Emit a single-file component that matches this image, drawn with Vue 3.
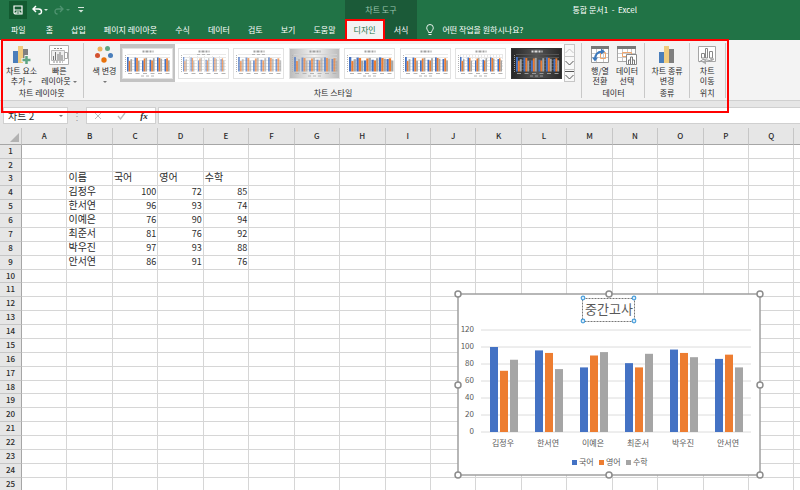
<script setup>
import { ref, computed } from 'vue'

const tabs = ['파일', '홈', '삽입', '페이지 레이아웃', '수식', '데이터', '검토', '보기', '도움말']
const columns = 'ABCDEFGHIJKLMNOPQ'.split('')
const rowCount = 25

const subjects = [
  { name: '국어', color: '#4472c4' },
  { name: '영어', color: '#ed7d31' },
  { name: '수학', color: '#a5a5a5' }
]

const students = [
  { name: '김정우', scores: [100, 72, 85] },
  { name: '한서연', scores: [96, 93, 74] },
  { name: '이예은', scores: [76, 90, 94] },
  { name: '최준서', scores: [81, 76, 92] },
  { name: '박우진', scores: [97, 93, 88] },
  { name: '안서연', scores: [86, 91, 76] }
]

const nameBox = ref('차트 2')
const formula = ref('')
const selectedStyle = ref(0)

const chartStyles = [
  { look: 'plain', bar: 1.7, legend: 'bottom' },
  { look: 'plain', bar: 1.3, legend: 'top', pale: true, dropLines: true },
  { look: 'plain', bar: 1.9, legend: 'top', pale: true },
  { look: 'silver', bar: 2, legend: 'bottom', pale: true },
  { look: 'plain', bar: 2.3, legend: 'bottom' },
  { look: 'plain', bar: 1.8, legend: 'bottom' },
  { look: 'plain', bar: 1.5, legend: 'bottom', hatch: true },
  { look: 'dark', bar: 1.9, legend: 'bottom' }
]

// header row plus the score rows, keyed by cell address
const cells = computed(() => {
  const map = { B3: '이름' }
  subjects.forEach((s, i) => {
    map['CDE'[i] + 3] = s.name
  })
  students.forEach((student, r) => {
    map['B' + (r + 4)] = student.name
    student.scores.forEach((score, i) => {
      map['CDE'[i] + (r + 4)] = score
    })
  })
  return map
})

const ticks = [0, 20, 40, 60, 80, 100, 120]
const yOf = (value) => 138 - value * 0.85
const groupX = (i) => 23 + i * 45

const handles = [
  [0, 0], [151, 0], [302, 0],
  [0, 91], [302, 91],
  [0, 181], [151, 181], [302, 181]
]
const titleHandles = [[125, 4], [176, 4], [125, 27], [176, 27]]
</script>

<template>
  <div class="excel">
    <header class="top">
      <div class="quick">
        <button class="quick-btn save" aria-label="저장">
          <svg width="10" height="10" viewBox="0 0 10 10">
            <path d="M1 1h8v8H2L1 8z" fill="none" stroke="#fff" stroke-width="1.2" />
            <path d="M1 5h8" stroke="#fff" />
            <path d="M3 9V7h4v2" fill="none" stroke="#fff" />
          </svg>
        </button>
        <button class="quick-btn undo" aria-label="실행 취소">
          <svg width="18" height="10" viewBox="0 0 18 10">
            <path d="M4 1L1 4l3 3M1 4h5.5q3 0 3 2.6T6.5 9" fill="none" stroke="#fff" stroke-width="1.5" />
            <path d="M12 4h4l-2 2z" fill="#d5e5db" />
          </svg>
        </button>
        <button class="quick-btn redo" aria-label="다시 실행">
          <svg width="18" height="10" viewBox="0 0 18 10">
            <path d="M6 1l3 3-3 3M9 4H4Q1 4 1 6.5T3.5 9" fill="none" stroke="#4f9370" stroke-width="1.3" />
            <path d="M12 4h4l-2 2z" fill="#4f9370" />
          </svg>
        </button>
        <button class="quick-btn more" aria-label="빠른 실행 도구 모음 사용자 지정">
          <svg width="6" height="8" viewBox="0 0 6 8">
            <path d="M0 1.5h6" stroke="#d5e5db" />
            <path d="M.5 4h5L3 6.5z" fill="#d5e5db" />
          </svg>
        </button>
      </div>
      <div class="context-title">차트 도구</div>
      <h1 class="doc-title">통합 문서1&nbsp; -&nbsp; Excel</h1>

      <nav class="tabs">
        <button v-for="tab in tabs" :key="tab" class="tab">{{ tab }}</button>
      </nav>
      <nav class="tabs context">
        <button class="tab active">디자인</button>
        <button class="tab">서식</button>
      </nav>
      <button class="ask">
        <svg width="8" height="12" viewBox="0 0 8 12">
          <path d="M2.5 8.5C2.5 6.5.7 6 .7 3.8a3.3 3.3 0 0 1 6.6 0C7.3 6 5.5 6.5 5.5 8.5z" fill="none" stroke="#e8f1ec" />
          <path d="M2.5 10.5h3" stroke="#e8f1ec" />
        </svg>
        어떤 작업을 원하시나요?
      </button>
    </header>

    <section class="ribbon">
      <div class="groups">
        <div class="group">
          <div class="tools">
            <button class="tool">
              <svg width="20" height="20" viewBox="0 0 20 20">
                <path d="M1 6h5v12H1z" fill="#4a7ebb" />
                <path d="M6 1h5v17H6z" fill="#efcb7e" />
                <path d="M11 4h5v11h-5z" fill="#7f7f7f" />
                <path d="M14.5 10v10M9.5 15h10" stroke="#f3f3f3" stroke-width="4" />
                <path d="M14.5 11v8M10.5 15h8" stroke="#5fa583" stroke-width="2.5" />
              </svg>
              <span>차트 요소</span>
              <span>추가 <i class="caret"></i></span>
            </button>
            <button class="tool">
              <svg width="20" height="20" viewBox="0 0 20 20">
                <path d="M.5.5h19v19H.5z" fill="#fff" stroke="#b0b0b0" />
                <path d="M5 3.5h9M4 17h10" stroke="#8a8a8a" stroke-dasharray="2 1" />
                <path d="M2.5 5.5h13v10h-13z" fill="#eee" stroke="#b8b8b8" />
                <path d="M4.5 15v-4M6.5 15V7M9 15V9M11 15V7M13 15v-5" stroke="#777" />
                <path d="M15.5 7.5h3v6h-3z" fill="#fff" stroke="#a6a6a6" />
              </svg>
              <span>빠른</span>
              <span>레이아웃 <i class="caret"></i></span>
            </button>
          </div>
          <div class="group-name">차트 레이아웃</div>
        </div>

        <div class="group">
          <div class="tools">
            <button class="tool colors">
              <svg width="20" height="20" viewBox="0 0 20 20">
                <circle cx="6" cy="4" r="2.5" fill="#ecb45c" />
                <circle cx="13.5" cy="3.5" r="2.5" fill="#5fa583" />
                <circle cx="3.5" cy="10.5" r="2.5" fill="#d35230" />
                <circle cx="16.5" cy="10.5" r="2.5" fill="#4a7ebb" />
                <circle cx="10" cy="15" r="2.7" fill="#e8710a" />
              </svg>
              <span>색 변경</span>
              <span><i class="caret"></i></span>
            </button>
            <div class="gallery">
              <button
                v-for="(item, i) in chartStyles"
                :key="i"
                class="style-item"
                :class="{ selected: selectedStyle === i }"
                :aria-label="'스타일 ' + (i + 1)"
                @click="selectedStyle = i"
              >
                <svg class="thumb" :class="item.look" width="51" height="31" viewBox="0 0 51 31">
                  <defs>
                    <linearGradient id="silver"><stop stop-color="#bbb" /><stop offset=".5" stop-color="#f4f4f4" /><stop offset="1" stop-color="#bcbcbc" /></linearGradient>
                    <linearGradient id="dark"><stop stop-color="#262626" /><stop offset=".5" stop-color="#555" /><stop offset="1" stop-color="#282828" /></linearGradient>
                  </defs>
                  <rect class="paper" x=".5" y=".5" width="50" height="30" />
                  <path class="head" d="M20.5 3.5h11" stroke-dasharray="2 1 3 1" stroke-width="2" />
                  <path class="lines" d="M5 6.5h43M5 9.5h43M5 12.5h43M5 15.5h43M5 18.5h43M5 21.5h43" />
                  <path v-if="item.hatch" class="lines" d="M5 7.5h43M5 8.5h43M5 10.5h43M5 13.5h43M5 17.5h43" stroke-dasharray="1 2" />
                  <path v-if="item.dropLines" class="lines" d="M11.5 8v16M19.5 8v16M26.5 8v16M34.5 8v16M41.5 8v16" />
                  <path class="marks" d="M3.5 7v17" stroke-dasharray="1 1" />
                  <g v-for="(student, n) in students" :key="n" :opacity="item.pale ? 0.7 : 1">
                    <rect
                      v-for="(score, k) in student.scores"
                      :key="k"
                      :x="5 + n * 7.5 + k * item.bar"
                      :y="23.5 - score * 0.145"
                      :width="item.bar"
                      :height="score * 0.145"
                      :fill="subjects[k].color"
                    />
                  </g>
                  <path class="marks" d="M6 25.5h42" stroke-dasharray="4 3.5" />
                  <path class="marks" :d="item.legend === 'top' ? 'M19 6.5h13' : 'M19 28h13'" stroke-dasharray="3 2" />
                </svg>
              </button>
              <div class="scroller">
                <button aria-label="위로"><svg width="9" height="6" viewBox="0 0 9 6"><path d="M.5 5l4-4 4 4" fill="none" stroke="#c4c4c4" /></svg></button>
                <button aria-label="아래로"><svg width="9" height="6" viewBox="0 0 9 6"><path d="M.5 1l4 4 4-4" fill="none" stroke="#555" /></svg></button>
                <button aria-label="자세히"><svg width="9" height="9" viewBox="0 0 9 9"><path d="M0 .5h9M.5 4l4 4 4-4" fill="none" stroke="#555" /></svg></button>
              </div>
            </div>
          </div>
          <div class="group-name">차트 스타일</div>
        </div>

        <div class="group">
          <div class="tools">
            <button class="tool">
              <svg width="20" height="20" viewBox="0 0 20 20">
                <path d="M1.5 2.5h17v15h-17z" fill="#fff" stroke="#9a9a9a" />
                <path d="M1 1h18v3H1z" fill="#777" />
                <path d="M2 8.5h16M2 12.5h16M6.5 4v13M13.5 4v13" stroke="#c9c9c9" />
                <path d="M10.5 7.5h5v6h-5z" fill="none" stroke="#f0a56b" />
                <path d="M5 14.5C5 9.5 7 7 12 6.5" fill="none" stroke="#3b78bd" stroke-width="2" />
                <path d="M11 3.5l4 3-4 3zM2 12.5h6l-3 4z" fill="#3b78bd" />
              </svg>
              <span>행/열</span>
              <span>전환</span>
            </button>
            <button class="tool">
              <svg width="20" height="20" viewBox="0 0 20 20">
                <path d="M.5 2.5h18v14H.5z" fill="#fff" stroke="#a6a6a6" />
                <path d="M0 1h19v3H0z" fill="#777" />
                <path d="M1 8.5h17M1 12.5h17M5.5 4v12M10.5 4v12M14.5 4v12" stroke="#c9c9c9" />
                <path d="M5.5 7.5h9v4h-9z" fill="none" stroke="#f0a56b" />
                <path d="M9.5 9.5h10v10h-10z" fill="#fff" stroke="#888" />
                <path d="M11.5 19v-4h2v4M13.5 19v-7h2v7M15.5 15h2v4" fill="none" stroke="#777" />
              </svg>
              <span>데이터</span>
              <span>선택</span>
            </button>
          </div>
          <div class="group-name">데이터</div>
        </div>

        <div class="group">
          <div class="tools">
            <button class="tool">
              <svg width="20" height="20" viewBox="0 0 20 20">
                <path d="M2 7h5v11H2z" fill="#4a7ebb" />
                <path d="M7 1h5v17H7z" fill="#efcb7e" />
                <path d="M12 4h5v14h-5z" fill="#7f7f7f" />
              </svg>
              <span>차트 종류</span>
              <span>변경</span>
            </button>
          </div>
          <div class="group-name">종류</div>
        </div>

        <div class="group">
          <div class="tools">
            <button class="tool">
              <svg width="20" height="20" viewBox="0 0 20 20">
                <path d="M1.5 1.5h17v15h-17z" fill="#fff" stroke="#a6a6a6" />
                <path d="M4.5 13V8.5h3V13zM8.5 13V3.5h2V13zM12.5 13V6.5h3V13z" fill="#fff" stroke="#888" />
                <path d="M2 17q4-4 8-2t7-1" fill="none" stroke="#999" />
                <path d="M5 17l4-2.5v5zM13 13l4 .5-3 3.5z" fill="#aaa" />
              </svg>
              <span>차트</span>
              <span>이동</span>
            </button>
          </div>
          <div class="group-name">위치</div>
        </div>
      </div>
    </section>

    <section class="formula-bar">
      <div class="name-box">
        <input v-model="nameBox" aria-label="이름 상자" />
        <i class="caret"></i>
      </div>
      <span class="grip">⋮</span>
      <div class="formula-tools">
        <button aria-label="취소"><svg width="8" height="8" viewBox="0 0 8 8"><path d="M1 1l6 6M7 1L1 7" stroke="#bbb" /></svg></button>
        <button aria-label="입력"><svg width="9" height="8" viewBox="0 0 9 8"><path d="M1 4l2.5 3L8 1" fill="none" stroke="#bbb" stroke-width="1.3" /></svg></button>
        <button class="fx" aria-label="함수 삽입">fx</button>
      </div>
      <input v-model="formula" class="formula" aria-label="수식 입력줄" />
    </section>

    <main class="sheet">
      <table>
        <thead>
          <tr>
            <th class="corner"><svg width="9" height="9" viewBox="0 0 9 9"><path d="M9 0v9H0z" fill="#b2b2b2" /></svg></th>
            <th v-for="col in columns" :key="col" scope="col">{{ col }}</th>
            <th></th>
          </tr>
        </thead>
        <tbody>
          <tr v-for="row in rowCount" :key="row">
            <th scope="row">{{ row }}</th>
            <td
              v-for="col in columns"
              :key="col"
              :class="{ number: typeof cells[col + row] === 'number' }"
            >{{ cells[col + row] }}</td>
            <td></td>
          </tr>
        </tbody>
      </table>

      <svg class="chart" width="302" height="181" viewBox="0 0 302 181" role="group" aria-label="중간고사">
        <rect width="302" height="181" fill="#fff" stroke="#a0a0a0" stroke-width="1.5" />
        <rect x="124.5" y="4.5" width="52" height="23" fill="none" stroke="#777" stroke-dasharray="2 1" />
        <text class="chart-title" x="151" y="20">중간고사</text>

        <g v-for="tick in ticks" :key="tick">
          <line x1="23" x2="293" :y1="yOf(tick)" :y2="yOf(tick)" stroke="#dcdcdc" />
          <text class="tick" x="16" :y="yOf(tick) + 2">{{ tick }}</text>
        </g>

        <g v-for="(student, i) in students" :key="student.name">
          <rect
            v-for="(score, k) in student.scores"
            :key="k"
            :x="groupX(i) + 9 + k * 10"
            :y="yOf(score)"
            width="8"
            :height="score * 0.85"
            :fill="subjects[k].color"
          />
          <text class="category" :x="groupX(i) + 22" y="152">{{ student.name }}</text>
        </g>

        <g v-for="(subject, i) in subjects" :key="subject.name">
          <rect :x="114 + i * 27" y="166" width="5" height="5" :fill="subject.color" />
          <text class="legend" :x="121 + i * 27" y="171">{{ subject.name }}</text>
        </g>

        <circle v-for="(h, i) in handles" :key="i" :cx="h[0]" :cy="h[1]" r="3" fill="#fff" stroke="#8c8c8c" stroke-width="1.5" />
        <circle v-for="(h, i) in titleHandles" :key="'t' + i" :cx="h[0]" :cy="h[1]" r="1.8" fill="#d9ecfb" stroke="#4a9fdc" stroke-width="1.2" />
      </svg>
    </main>
  </div>
</template>

<style>
body {
  margin: 0;
  overflow: hidden;
}
</style>

<style scoped>
.excel {
  height: 100vh;
  overflow: hidden;
  display: flex;
  flex-direction: column;
  background: #e6e6e6;
  color: #2b2b2b;
  font-family: 'Noto Sans CJK KR', sans-serif;
  font-size: 8px;
  line-height: 10px;
}

button,
input {
  margin: 0;
  padding: 0;
  border: none;
  background: none;
  color: inherit;
  font: inherit;
}

button {
  cursor: pointer;
}

svg {
  display: block;
  flex-shrink: 0;
}

/* title bar and tabs */
.top {
  display: grid;
  grid-template-columns: auto auto 1fr;
  grid-template-rows: 20px 20px;
  background: #217346;
  color: #fff;
}

.quick {
  display: flex;
  align-items: center;
  padding-left: 9px;
}

.quick-btn {
  display: flex;
  align-items: center;
  justify-content: center;
}

.save {
  width: 18px;
  height: 18px;
  background: #125a30;
}

.undo {
  margin-left: 5px;
}

.redo {
  margin-left: 4px;
}

.more {
  margin-left: 6px;
}

.context-title {
  background: #1b5a38;
  color: #9cc5ae;
  text-align: center;
  line-height: 19px;
}

.doc-title {
  margin: 0;
  padding-right: 8px;
  font-size: 8px;
  font-weight: 400;
  line-height: 20px;
  text-align: center;
}

.tabs {
  display: flex;
  padding-left: 2px;
}

.tab {
  padding: 0 9px;
  white-space: nowrap;
}

.tabs:not(.context) .tab:first-child {
  padding-right: 11px;
}

.context {
  padding-left: 0;
  background: #1b5a38;
}

.tab.active {
  position: relative;
  z-index: 3;
  margin: -1px 0;
  padding: 0 7px;
  border: 2px solid #f00;
  background: #f3f3f3;
  color: #217346;
}

.ask {
  display: flex;
  align-items: center;
  gap: 8px;
  padding-left: 9px;
}

/* ribbon */
.ribbon {
  display: flex;
  background: #f3f3f3;
  border-bottom: 1px solid #d0d0d0;
}

.groups {
  position: relative;
  display: flex;
  padding: 3px 0 2px;
}

.groups::after {
  content: '';
  position: absolute;
  z-index: 2;
  inset: -1px -3px -13px 1px;
  border: 2px solid #f00;
  pointer-events: none;
}

.group {
  display: flex;
  flex-direction: column;
  padding: 0 4px;
  border-right: 1px solid #c8c8c8;
}

.tools {
  display: flex;
  justify-content: center;
  height: 44px;
}

.tool {
  display: flex;
  flex-direction: column;
  align-items: center;
  min-width: 27px;
  padding: 2px 2px 0;
  white-space: nowrap;
}

.tool svg {
  margin-bottom: 1px;
}

.tool span {
  height: 10px;
}

.colors {
  min-width: 32px;
}

.caret {
  display: inline-block;
  margin-left: 1px;
  border: 2px solid transparent;
  border-top-color: #777;
  border-bottom: none;
  vertical-align: middle;
}

.group-name {
  padding-top: 1px;
  text-align: center;
}

.gallery {
  display: flex;
  height: 38px;
  margin: 1px 2px 0 0;
  background: #fff;
}

.style-item {
  display: flex;
  align-items: center;
  justify-content: center;
  box-sizing: border-box;
  width: 55px;
  margin-right: 1px;
}

.style-item:nth-child(even) {
  margin-right: 0;
}

.style-item.selected {
  background: #c3c3c3;
}

.paper {
  fill: #fff;
  stroke: #e2e2e2;
}

.silver .paper {
  fill: url(#silver);
}

.dark .paper {
  fill: url(#dark);
  stroke: #333;
}

.lines {
  stroke: #e8e8e8;
}

.silver .lines {
  stroke: #d2d2d2;
}

.dark .lines {
  stroke: #555;
}

.head {
  stroke: #a0a0a0;
}

.marks {
  stroke: #b4b4b4;
}

.dark .marks {
  stroke: #999;
}

.dark .head {
  stroke: #ddd;
}

.scroller {
  display: flex;
  flex-direction: column;
  width: 11px;
}

.scroller button {
  flex: 1;
  display: flex;
  align-items: center;
  justify-content: center;
  border: 1px solid #c6c6c6;
  background: #f8f8f8;
}

.scroller button + button {
  border-top: none;
}

/* formula bar */
.formula-bar {
  display: flex;
  height: 17px;
  padding: 6px 0 4px 3px;
  font-size: 10px;
}

.name-box,
.formula-tools,
.formula {
  box-sizing: border-box;
  border: 1px solid #d0d0d0;
  background: #fff;
}

.name-box {
  display: flex;
  align-items: center;
  width: 65px;
  padding: 0 4px;
}

.name-box input {
  flex: 1;
  min-width: 0;
  height: 15px;
  line-height: 15px;
}

.grip {
  width: 18px;
  color: #999;
  line-height: 17px;
  text-align: center;
}

.formula-tools {
  display: flex;
  justify-content: space-around;
  align-items: center;
  width: 70px;
  margin-right: 2px;
}

.fx {
  font-family: 'Liberation Serif', serif;
  font-style: italic;
  font-weight: 700;
  font-size: 9px;
}

.formula {
  flex: 1;
  border-right: none;
}

/* worksheet */
.sheet {
  position: relative;
  flex: 1;
  min-height: 0;
  overflow: hidden;
}

table {
  width: 105%;
  table-layout: fixed;
  border-collapse: separate;
  border-spacing: 0;
  background: #fff;
}

tr {
  height: 14px;
}

tbody tr:nth-child(8n + 2) {
  height: 13px;
}

thead tr {
  height: 17px;
}

th,
td {
  box-sizing: border-box;
  padding: 0;
  border-right: 1px solid #d6d6d6;
  border-bottom: 1px solid #d6d6d6;
  line-height: 10px;
  vertical-align: top;
}

th {
  background: #e6e6e6;
  font-size: 8px;
  font-weight: 500;
  border-color: #c6c6c6;
}

thead th {
  padding-top: 3px;
  border-bottom-color: #a6a6a6;
}

tbody th {
  padding-top: 1px;
  border-right-color: #a6a6a6;
}

.corner {
  width: 22px;
}

.corner svg {
  margin: 2px 2px 0 auto;
}

td {
  padding: 0 1px;
  font-size: 10px;
  white-space: nowrap;
}

td.number {
  padding-top: 1px;
  font-size: 9px;
  text-align: right;
}

.chart {
  position: absolute;
  left: 458px;
  top: 166px;
  overflow: visible;
}

.chart text {
  fill: #595959;
  font-size: 8px;
}

.chart .chart-title {
  font-size: 13px;
  text-anchor: middle;
}

.chart .tick {
  text-anchor: end;
}

.category {
  text-anchor: middle;
}
</style>
